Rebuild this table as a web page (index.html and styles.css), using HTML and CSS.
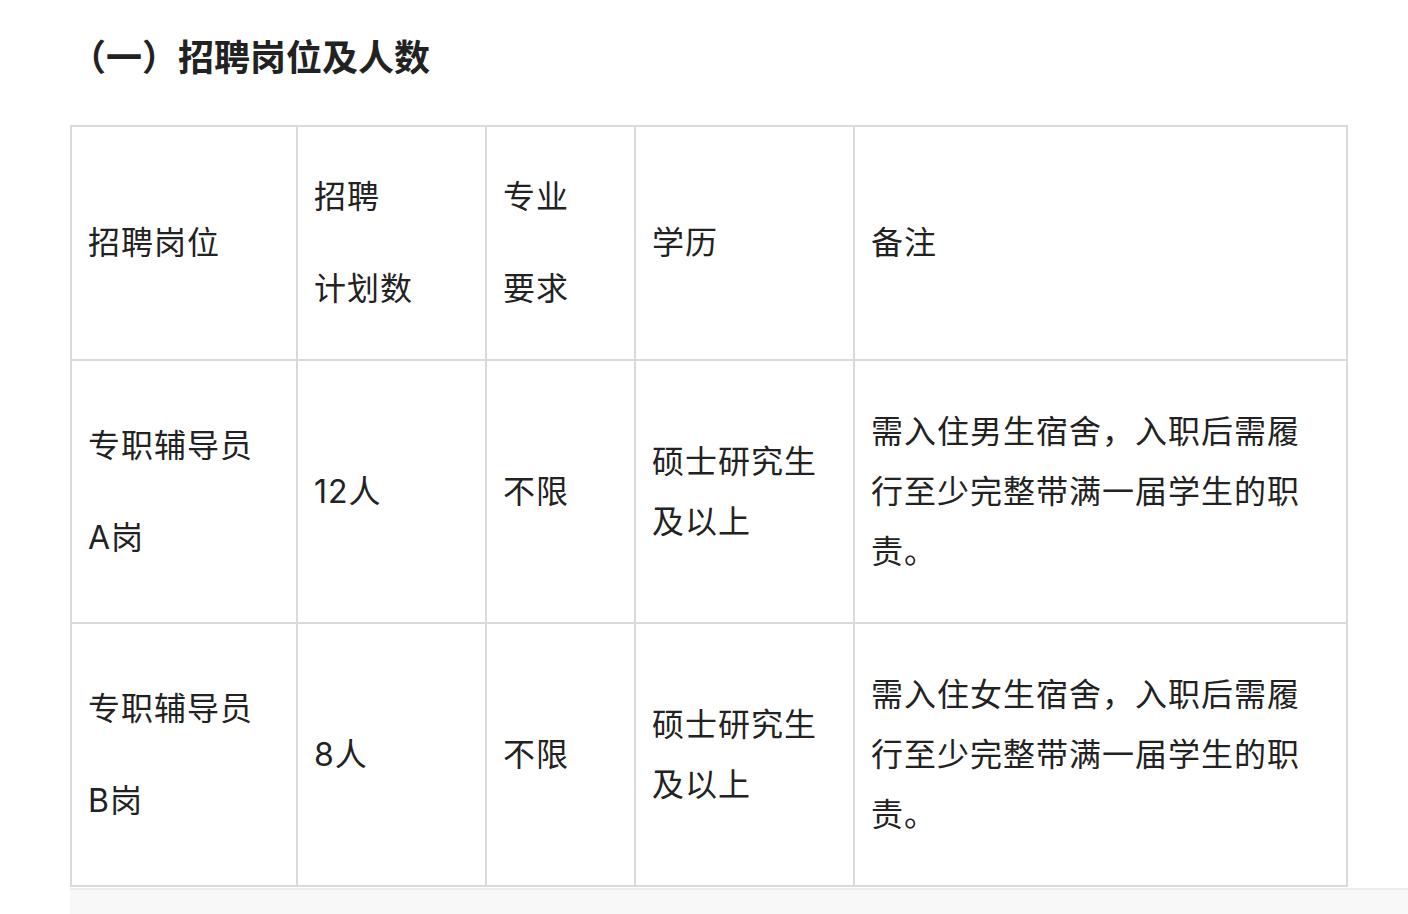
FILE: index.html
```html
<!DOCTYPE html>
<html lang="zh-CN">
<head>
<meta charset="utf-8">
<title>招聘岗位及人数</title>
<link rel="stylesheet" href="styles.css">
</head>
<body>
<main class="page">
  <h3 class="section-title">（一）招聘岗位及人数</h3>
  <div class="table-wrap">
    <table class="jobs">
      <colgroup>
        <col class="c1"><col class="c2"><col class="c3"><col class="c4"><col class="c5">
      </colgroup>
      <tbody>
        <tr class="row-head">
          <td><p>招聘岗位</p></td>
          <td><p>招聘</p><p>计划数</p></td>
          <td><p>专业</p><p>要求</p></td>
          <td><p>学历</p></td>
          <td><p>备注</p></td>
        </tr>
        <tr>
          <td><p>专职辅导员</p><p>A岗</p></td>
          <td><p>12人</p></td>
          <td><p>不限</p></td>
          <td><p>硕士研究生及以上</p></td>
          <td><p>需入住男生宿舍，入职后需履行至少完整带满一届学生的职责。</p></td>
        </tr>
        <tr>
          <td><p>专职辅导员</p><p>B岗</p></td>
          <td><p>8人</p></td>
          <td><p>不限</p></td>
          <td><p>硕士研究生及以上</p></td>
          <td><p>需入住女生宿舍，入职后需履行至少完整带满一届学生的职责。</p></td>
        </tr>
      </tbody>
    </table>
    <div class="scrollbar"></div>
  </div>
</main>
</body>
</html>
```
FILE: styles.css
```css
html, body {
  margin: 0;
  padding: 0;
  background: #ffffff;
}

body {
  font-family: "Inter", "Noto Sans CJK SC", sans-serif;
  color: #222222;
}

.page {
  padding: 31px 0 0 70px;
}

.section-title {
  margin: 0 0 40px 0;
  font-size: 36px;
  line-height: 54px;
  font-weight: 700;
  color: #222222;
}

.table-wrap {
  display: flex;
  flex-direction: column;
}

.jobs {
  border-collapse: separate;
  border-spacing: 0;
  table-layout: fixed;
  width: 1278px;
  border-top: 2px solid #dadada;
  border-left: 2px solid #dadada;
}

.c1 { width: 226px; }
.c2 { width: 189px; }
.c3 { width: 149px; }
.c4 { width: 219px; }
.c5 { width: 493px; }

.jobs td {
  box-sizing: border-box;
  border-right: 2px solid #dadada;
  border-bottom: 2px solid #dadada;
  padding: 41px 16px 40px 16px;
  vertical-align: middle;
  font-size: 32px;
  line-height: 60px;
  letter-spacing: 1px;
  color: #222222;
}

.jobs p {
  margin: 0;
}

.jobs p + p {
  margin-top: 32px;
}

.row-head td {
  padding-top: 40px;
  padding-bottom: 40px;
}

.scrollbar {
  margin-top: 1px;
  height: 26px;
  border-top: 2px solid #ececec;
  background: #f8f8f8;
}
```
